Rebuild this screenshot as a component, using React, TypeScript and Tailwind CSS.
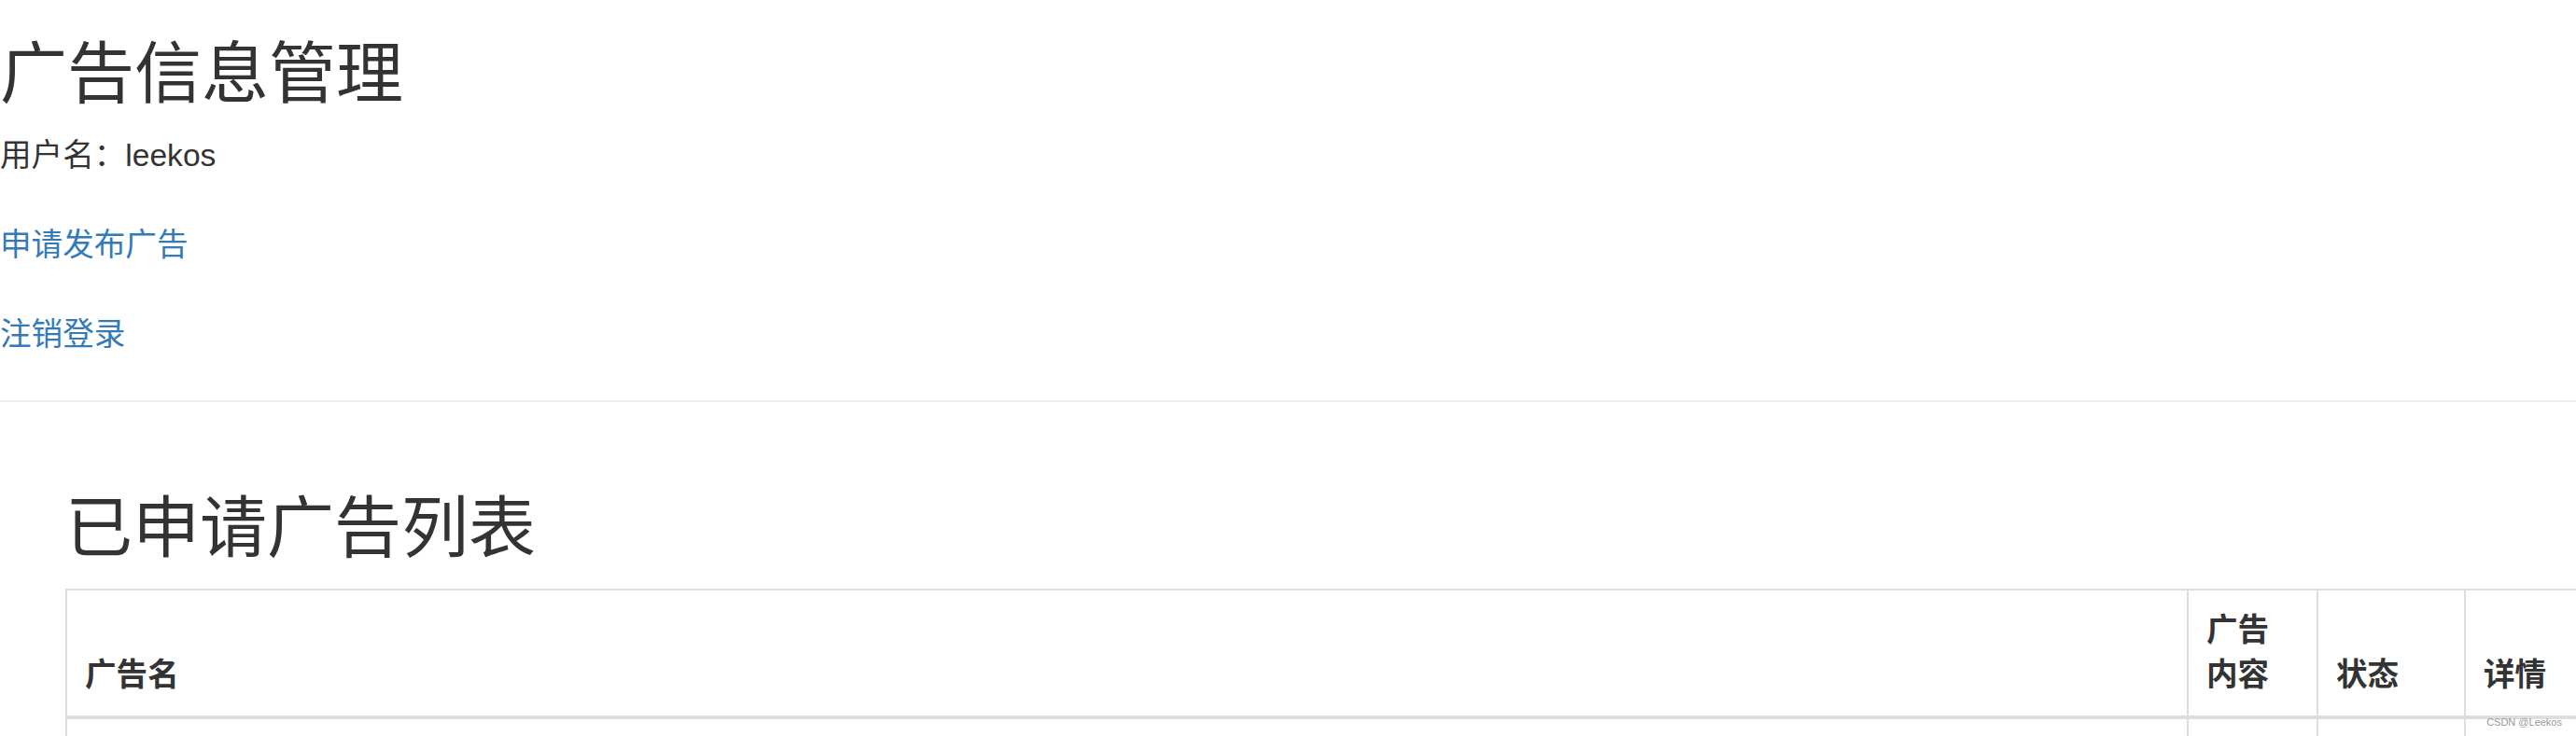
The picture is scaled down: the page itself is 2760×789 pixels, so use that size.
import React from 'react'

// ─── Data ─────────────────────────────────────────────────────────────────────

const COLUMNS: { label: React.ReactNode; width: string }[] = [
  { label: '广告名', width: 'w-[2273px]' },
  { label: <>广告<br />内容</>, width: 'w-[139px]' },
  { label: '状态', width: 'w-[158px]' },
  { label: '详情', width: 'w-[160px]' },
]

// ─── Ad list table ────────────────────────────────────────────────────────────

function AdTable() {
  return (
    <table className="table-fixed border-collapse border-2 border-[#ddd] w-[2730px]">
      <colgroup>
        {COLUMNS.map((c, i) => (
          <col key={i} className={c.width} />
        ))}
      </colgroup>
      <thead>
        <tr>
          {COLUMNS.map((c, i) => (
            <th
              key={i}
              className="border-2 border-b-4 border-[#ddd] p-[19px] text-left align-bottom font-bold"
            >
              {c.label}
            </th>
          ))}
        </tr>
      </thead>
      <tbody>
        <tr>
          {COLUMNS.map((_, i) => (
            <td key={i} className="border-2 border-[#ddd] p-[19px] h-[86px]" />
          ))}
        </tr>
      </tbody>
    </table>
  )
}

// ─── Page ─────────────────────────────────────────────────────────────────────

export default function App() {
  return (
    <div
      className="relative w-[2760px] h-[789px] overflow-hidden bg-white text-[#333] text-[33.6px] leading-[48px]"
      style={{ fontFamily: '"Liberation Sans", "Noto Sans CJK SC", sans-serif' }}
    >
      {/* Header */}
      <div className="pt-[40px]">
        <h1 className="m-0 mb-[24px] text-[72px] leading-[79px] font-normal">广告信息管理</h1>
        <div>
          用户名：leekos
          <br />
          <br />
          <a href="#" className="text-[#337ab7] no-underline">申请发布广告</a>
          <br />
          <br />
          <a href="#" className="text-[#337ab7] no-underline">注销登录</a>
        </div>
      </div>

      <hr className="mt-[46px] border-0 border-t-2 border-[#eee]" />

      {/* List */}
      <div className="pl-[70px] pt-[96px]">
        <h2 className="m-0 mb-[25px] text-[72px] leading-[79px] font-normal">已申请广告列表</h2>
        <AdTable />
      </div>

      {/* Watermark */}
      <span className="absolute right-[15px] bottom-[9px] text-[11px] leading-[12px] text-[#999]">
        CSDN @Leekos
      </span>
    </div>
  )
}
